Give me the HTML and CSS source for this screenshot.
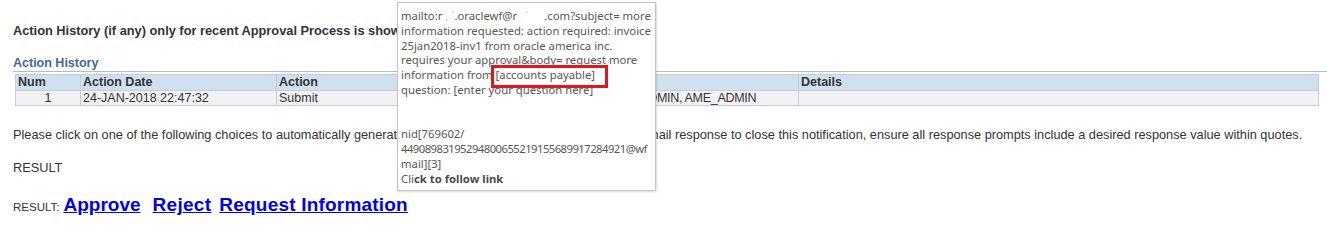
FILE: index.html
```html
<!DOCTYPE html>
<html lang="en">
<head>
    <meta charset="UTF-8">
    <title>Notification</title>
    <link rel="stylesheet" href="styles.css">
</head>
<body>
    <div class="page">
        <h2 class="intro">Action History (if any) only for recent Approval Process is shown below</h2>

        <div class="section-title">Action History</div>

        <table class="history">
            <thead>
                <tr>
                    <th class="col-num">Num</th>
                    <th class="col-date">Action Date</th>
                    <th class="col-action">Action</th>
                    <th class="col-from">From</th>
                    <th class="col-details">Details</th>
                </tr>
            </thead>
            <tbody>
                <tr>
                    <td class="num">1</td>
                    <td>24-JAN-2018 22:47:32</td>
                    <td>Submit</td>
                    <td class="names">SYSADMIN, AME_ADMIN</td>
                    <td></td>
                </tr>
            </tbody>
        </table>

        <p class="note">Please click on one of the following choices to automatically generate an E-mail response. Before sending the E-mail response to close this notification, ensure all response prompts include a desired response value within quotes.</p>

        <p class="note">RESULT</p>

        <p class="result"><span class="label">RESULT:</span><a href="#" class="first">Approve</a><a href="#" class="second">Reject</a><a href="#" class="third">Request Information</a></p>
    </div>

    <!-- link tooltip shown by the mail client -->
    <div class="link-tip">
        mailto:r <span class="blur">,</span> <span class="blur">`</span>.oraclewf@r<span class="blur">&nbsp;&nbsp;¨&nbsp;&nbsp;&nbsp;&nbsp;&nbsp;</span>.com?subject= more<br>
        information requested: action required: invoice<br>
        25jan2018-inv1 from oracle america inc.<br>
        requires your approval&amp;body= request more<br>
        information from <span class="marked">[accounts payable]</span><br>
        question: [enter your question here]<br>
        <br>
        <br>
        nid[769602/<br>
        <span class="digits">44908983195294800655219155689917284921@wf</span><br>
        mail][3]<br>
        Cli<b>ck to follow link</b>
    </div>
</body>
</html>
```

FILE: styles.css
```css
* {
    margin: 0;
    padding: 0;
    box-sizing: border-box;
}

body {
    font-family: 'Liberation Sans', Arial, sans-serif;
    font-size: 12.75px;
    color: #333;
    background: #fff;
    position: relative;
}

.page {
    padding: 23px 0 0 13px;
}

.intro {
    font-size: 12.8px;
    font-weight: bold;
    color: #333;
    line-height: 15px;
    margin-bottom: 18px;
}

.section-title {
    color: #3c69a4;
    font-weight: bold;
    font-size: 12.5px;
    line-height: 15px;
    border-bottom: 1px solid #a9bfd8;
    margin-bottom: 2px;
}

.history {
    border-collapse: collapse;
    width: 1304px;
    margin-left: 2px;
    font-size: 12.5px;
}

.history th,
.history td {
    border: 1px solid #c9ccd2;
    text-align: left;
    padding: 0 2px;
    height: 15px;
    line-height: 13px;
    font-weight: normal;
}

.history th {
    background: #cfe0f1;
    font-weight: bold;
    height: 16px;
}

.history td {
    background: #f2f2f5;
}

.history td.num {
    text-align: center;
}

.history td.names {
    letter-spacing: -0.3px;
}

.col-num { width: 65px; }
.col-date { width: 196px; }
.col-action { width: 337px; }
.col-from { width: 185px; }

.note {
    margin-top: 22px;
    line-height: 14px;
}

.note + .note {
    margin-top: 19px;
}

.result {
    margin-top: 19px;
    line-height: 22px;
}

.result .label {
    font-size: 11.5px;
}

.result a {
    color: #0000ee;
    font-size: 19px;
    font-weight: bold;
}

.result .first {
    margin-left: 4px;
}

.result .second {
    margin-left: 12px;
    letter-spacing: 0.3px;
}

.result .third {
    margin-left: 8px;
    letter-spacing: 0.2px;
}

.link-tip {
    position: absolute;
    left: 397px;
    top: 2px;
    width: 259px;
    height: 189px;
    background: #fff;
    border: 1px solid #c4c4c4;
    box-shadow: 1px 1px 2px rgba(0, 0, 0, 0.15);
    padding: 6px 3px 0 3px;
    font-family: 'Noto Sans', 'Open Sans', sans-serif;
    font-size: 11.3px;
    line-height: 14.8px;
    color: #585858;
    white-space: nowrap;
}

.link-tip b {
    color: #4a4a4a;
}

.blur {
    color: #c8c8c8;
}

.digits {
    letter-spacing: -0.55px;
}

.marked {
    position: relative;
}

.marked::after {
    content: "";
    position: absolute;
    left: -5px;
    right: -13px;
    top: -2px;
    bottom: -6px;
    border: 3px solid #e8141c;
}
```
